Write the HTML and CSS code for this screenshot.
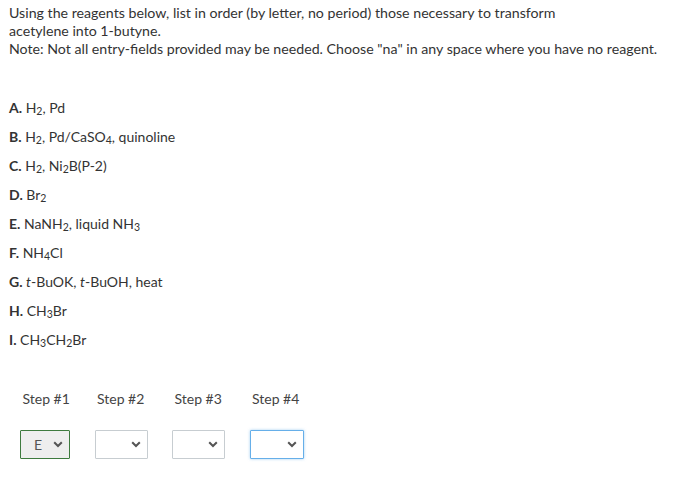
FILE: index.html
```html
<!DOCTYPE html>
<html>
<head>
<meta charset="utf-8">
<link rel="stylesheet" href="styles.css">
</head>
<body>
<div class="question">
  <p class="intro">Using the reagents below, list in order (by letter, no period) those necessary to transform<br>acetylene into 1-butyne.<br>Note: Not all entry-fields provided may be needed. Choose "na" in any space where you have no reagent.</p>
  <ul class="reagents">
    <li><b>A.</b> H<sub>2</sub>, Pd</li>
    <li><b>B.</b> H<sub>2</sub>, Pd/CaSO<sub>4</sub>, quinoline</li>
    <li><b>C.</b> H<sub>2</sub>, Ni<sub>2</sub>B(P-2)</li>
    <li><b>D.</b> Br<sub>2</sub></li>
    <li><b>E.</b> NaNH<sub>2</sub>, liquid NH<sub>3</sub></li>
    <li><b>F.</b> NH<sub>4</sub>Cl</li>
    <li><b>G.</b> <i>t</i>-BuOK, <i>t</i>-BuOH, heat</li>
    <li><b>H.</b> CH<sub>3</sub>Br</li>
    <li><b>I.</b> CH<sub>3</sub>CH<sub>2</sub>Br</li>
  </ul>
  <div class="steps">
    <div class="step">
      <div class="step-label">Step #1</div>
      <div class="select correct"><span class="val">E</span><svg class="chev" width="10" height="7" viewBox="0 0 10 7"><path d="M1.2 1.2 L5 5 L8.8 1.2" fill="none" stroke="#555" stroke-width="2"/></svg></div>
    </div>
    <div class="step">
      <div class="step-label">Step #2</div>
      <div class="select"><span class="val"></span><svg class="chev" width="10" height="7" viewBox="0 0 10 7"><path d="M1.2 1.2 L5 5 L8.8 1.2" fill="none" stroke="#555" stroke-width="2"/></svg></div>
    </div>
    <div class="step">
      <div class="step-label">Step #3</div>
      <div class="select"><span class="val"></span><svg class="chev" width="10" height="7" viewBox="0 0 10 7"><path d="M1.2 1.2 L5 5 L8.8 1.2" fill="none" stroke="#555" stroke-width="2"/></svg></div>
    </div>
    <div class="step">
      <div class="step-label">Step #4</div>
      <div class="select focused"><span class="val"></span><svg class="chev" width="10" height="7" viewBox="0 0 10 7"><path d="M1.2 1.2 L5 5 L8.8 1.2" fill="none" stroke="#555" stroke-width="2"/></svg></div>
    </div>
  </div>
</div>
</body>
</html>
```
FILE: styles.css
```css
html, body {
  margin: 0;
  padding: 0;
  background: #fff;
}
body {
  font-family: Lato, "Open Sans", sans-serif;
  font-size: 14px;
  color: #333;
}
.question {
  padding: 4px 9px;
}
.intro {
  margin: 0;
  line-height: 18px;
  font-size: 14.2px;
}
.reagents {
  list-style: none;
  margin: 41px 0 0 0;
  padding: 0;
}
.reagents li {
  height: 29px;
  line-height: 18px;
}
.reagents b {
  font-weight: bold;
}
sub {
  font-size: 10.5px;
  line-height: 0;
  vertical-align: -2px;
}
.steps {
  display: flex;
  margin-top: 30px;
  padding-left: 11px;
  gap: 24.5px;
}
.step {
  display: flex;
  flex-direction: column;
  align-items: flex-start;
}
.step-label {
  line-height: 18px;
  padding-left: 2.5px;
  margin-bottom: 22px;
  color: #444;
  white-space: nowrap;
}
.select {
  position: relative;
  box-sizing: border-box;
  width: 53px;
  height: 29px;
  border: 1px solid #c7cdd1;
  background: #fff;
  border-radius: 1px;
  display: flex;
  align-items: center;
  padding-left: 13px;
  color: #555;
  font-size: 14px;
}
.select.correct {
  width: 50px;
  border-color: #3e7a3e;
  background: #eeeeee;
}
.select.focused {
  width: 54px;
  border-color: #66afe9;
  box-shadow: 0 0 3px rgba(102, 175, 233, 0.6);
}
.chev {
  position: absolute;
  right: 6px;
  top: 10px;
}
```
